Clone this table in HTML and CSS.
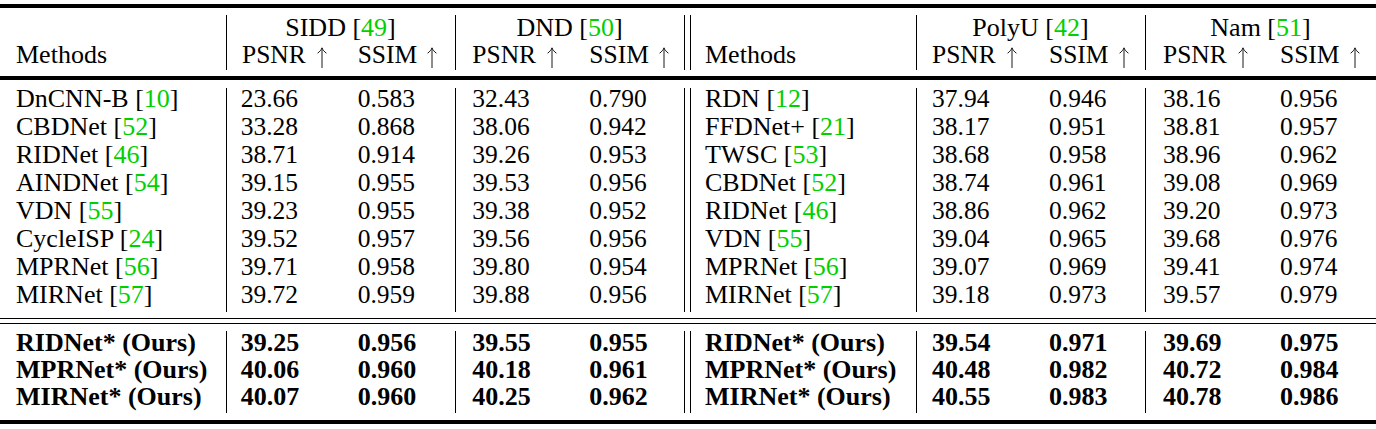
FILE: index.html
```html
<!DOCTYPE html>
<html>
<head>
<meta charset="utf-8">
<link rel="stylesheet" href="styles.css">
</head>
<body>
<div class="page">
  <div class="rule heavy top"></div>
  <div class="sec head">
    <div class="mh">Methods</div>
    <div class="grp g-sidd">SIDD [<span class="ref">49</span>]</div>
    <div class="grp g-dnd">DND [<span class="ref">50</span>]</div>
    <div class="grp g-poly">PolyU [<span class="ref">42</span>]</div>
    <div class="grp g-nam">Nam [<span class="ref">51</span>]</div>
    <div class="sub p2">PSNR<svg class="up psnr" viewBox="0 0 10 21" aria-label="↑"><path d="M5 1.2V21M5 0.8C4.2 3 2.6 4.8 0.6 6.2M5 0.8C5.8 3 7.4 4.8 9.4 6.2"/></svg></div>
    <div class="sub p3">SSIM<svg class="up ssim" viewBox="0 0 10 21" aria-label="↑"><path d="M5 1.2V21M5 0.8C4.2 3 2.6 4.8 0.6 6.2M5 0.8C5.8 3 7.4 4.8 9.4 6.2"/></svg></div>
    <div class="sub p4">PSNR<svg class="up psnr" viewBox="0 0 10 21" aria-label="↑"><path d="M5 1.2V21M5 0.8C4.2 3 2.6 4.8 0.6 6.2M5 0.8C5.8 3 7.4 4.8 9.4 6.2"/></svg></div>
    <div class="sub p5">SSIM<svg class="up ssim" viewBox="0 0 10 21" aria-label="↑"><path d="M5 1.2V21M5 0.8C4.2 3 2.6 4.8 0.6 6.2M5 0.8C5.8 3 7.4 4.8 9.4 6.2"/></svg></div>
    <div class="sub p6 name">Methods</div>
    <div class="sub p7">PSNR<svg class="up psnr" viewBox="0 0 10 21" aria-label="↑"><path d="M5 1.2V21M5 0.8C4.2 3 2.6 4.8 0.6 6.2M5 0.8C5.8 3 7.4 4.8 9.4 6.2"/></svg></div>
    <div class="sub p8">SSIM<svg class="up ssim" viewBox="0 0 10 21" aria-label="↑"><path d="M5 1.2V21M5 0.8C4.2 3 2.6 4.8 0.6 6.2M5 0.8C5.8 3 7.4 4.8 9.4 6.2"/></svg></div>
    <div class="sub p9">PSNR<svg class="up psnr" viewBox="0 0 10 21" aria-label="↑"><path d="M5 1.2V21M5 0.8C4.2 3 2.6 4.8 0.6 6.2M5 0.8C5.8 3 7.4 4.8 9.4 6.2"/></svg></div>
    <div class="sub p10">SSIM<svg class="up ssim" viewBox="0 0 10 21" aria-label="↑"><path d="M5 1.2V21M5 0.8C4.2 3 2.6 4.8 0.6 6.2M5 0.8C5.8 3 7.4 4.8 9.4 6.2"/></svg></div>
  </div>
  <div class="rule heavy mid"></div>
  <div class="sec rows body">
    <div>DnCNN-B [<span class="ref">10</span>]</div><div>23.66</div><div>0.583</div><div>32.43</div><div>0.790</div><div>RDN [<span class="ref">12</span>]</div><div>37.94</div><div>0.946</div><div>38.16</div><div>0.956</div>
    <div>CBDNet [<span class="ref">52</span>]</div><div>33.28</div><div>0.868</div><div>38.06</div><div>0.942</div><div>FFDNet+ [<span class="ref">21</span>]</div><div>38.17</div><div>0.951</div><div>38.81</div><div>0.957</div>
    <div>RIDNet [<span class="ref">46</span>]</div><div>38.71</div><div>0.914</div><div>39.26</div><div>0.953</div><div>TWSC [<span class="ref">53</span>]</div><div>38.68</div><div>0.958</div><div>38.96</div><div>0.962</div>
    <div>AINDNet [<span class="ref">54</span>]</div><div>39.15</div><div>0.955</div><div>39.53</div><div>0.956</div><div>CBDNet [<span class="ref">52</span>]</div><div>38.74</div><div>0.961</div><div>39.08</div><div>0.969</div>
    <div>VDN [<span class="ref">55</span>]</div><div>39.23</div><div>0.955</div><div>39.38</div><div>0.952</div><div>RIDNet [<span class="ref">46</span>]</div><div>38.86</div><div>0.962</div><div>39.20</div><div>0.973</div>
    <div>CycleISP [<span class="ref">24</span>]</div><div>39.52</div><div>0.957</div><div>39.56</div><div>0.956</div><div>VDN [<span class="ref">55</span>]</div><div>39.04</div><div>0.965</div><div>39.68</div><div>0.976</div>
    <div>MPRNet [<span class="ref">56</span>]</div><div>39.71</div><div>0.958</div><div>39.80</div><div>0.954</div><div>MPRNet [<span class="ref">56</span>]</div><div>39.07</div><div>0.969</div><div>39.41</div><div>0.974</div>
    <div>MIRNet [<span class="ref">57</span>]</div><div>39.72</div><div>0.959</div><div>39.88</div><div>0.956</div><div>MIRNet [<span class="ref">57</span>]</div><div>39.18</div><div>0.973</div><div>39.57</div><div>0.979</div>
  </div>
  <div class="rule double"></div>
  <div class="sec rows ours">
    <div>RIDNet* (Ours)</div><div>39.25</div><div>0.956</div><div>39.55</div><div>0.955</div><div>RIDNet* (Ours)</div><div>39.54</div><div>0.971</div><div>39.69</div><div>0.975</div>
    <div>MPRNet* (Ours)</div><div>40.06</div><div>0.960</div><div>40.18</div><div>0.961</div><div>MPRNet* (Ours)</div><div>40.48</div><div>0.982</div><div>40.72</div><div>0.984</div>
    <div>MIRNet* (Ours)</div><div>40.07</div><div>0.960</div><div>40.25</div><div>0.962</div><div>MIRNet* (Ours)</div><div>40.55</div><div>0.983</div><div>40.78</div><div>0.986</div>
  </div>
  <div class="rule heavy bottom"></div>
</div>
</body>
</html>
```

FILE: styles.css
```css
html, body {
  margin: 0;
  padding: 0;
  background: #fff;
}
.page {
  width: 1376px;
  padding-top: 4px;
  font-family: "Liberation Serif", "Times New Roman", serif;
  font-size: 25.5px;
  color: #000;
}
.rule.heavy {
  background: #000;
  height: 3.5px;
}
.rule.top { margin-bottom: 6.5px; }
.rule.mid { margin-top: 6px; margin-bottom: 5px; }
.rule.double {
  margin-top: 6.5px;
  margin-bottom: 4.5px;
  height: 6px;
  border-top: 1.5px solid #000;
  border-bottom: 1.5px solid #000;
  box-sizing: border-box;
}
.rule.bottom { margin-top: 6.5px; height: 4.5px; }

.sec {
  display: grid;
  grid-template-columns: 226px 115px 114px 118px 111px 232px 117px 112px 118px 113px;
  background-image: linear-gradient(to right,
    transparent 226px, #000 226px 227px,
    transparent 227px 455px, #000 455px 456px,
    transparent 456px 684px, #000 684px 685px,
    transparent 685px 690px, #000 690px 691px,
    transparent 691px 916px, #000 916px 917px,
    transparent 917px 1145px, #000 1145px 1146px,
    transparent 1146px);
  background-repeat: no-repeat;
}
.ref { color: #00d000; }

/* header */
.head {
  line-height: 27px;
  padding-bottom: 2px;
  grid-template-rows: 27px 27px;
  background-position: 0 1px;
}
.head .mh { grid-column: 1; grid-row: 1 / 3; align-self: end; padding-left: 16px; font-size: 26px; }
.head .grp { grid-row: 1; text-align: center; font-size: 26px; }
.head .name { font-size: 26px; }
.g-sidd { grid-column: 2 / 4; }
.g-dnd { grid-column: 4 / 6; }
.g-poly { grid-column: 7 / 9; }
.g-nam { grid-column: 9 / 11; }
.head .sub { grid-row: 2; white-space: nowrap; }
.p2 { grid-column: 2; padding-left: 16px; }
.p3 { grid-column: 3; padding-left: 16.7px; }
.p4 { grid-column: 4; padding-left: 17.3px; }
.p5 { grid-column: 5; padding-left: 16.3px; }
.p6 { grid-column: 6; padding-left: 21px; }
.p7 { grid-column: 7; padding-left: 16px; }
.p8 { grid-column: 8; padding-left: 16px; }
.p9 { grid-column: 9; padding-left: 18px; }
.p10 { grid-column: 10; padding-left: 17px; }

.up {
  width: 10px;
  height: 21px;
  vertical-align: -5px;
  fill: none;
  stroke: #1a1a1a;
  stroke-width: 1;
}
.up.psnr { margin-left: 11px; }
.up.ssim { margin-left: 10px; }

/* data rows */
.rows > :nth-child(10n+1) { padding-left: 16px; }
.rows > :nth-child(10n+2) { padding-left: 14.7px; }
.rows > :nth-child(10n+3) { padding-left: 16.7px; }
.rows > :nth-child(10n+4) { padding-left: 17.3px; }
.rows > :nth-child(10n+5) { padding-left: 16.3px; }
.rows > :nth-child(10n+6) { padding-left: 21px; }
.rows > :nth-child(10n+7) { padding-left: 16px; }
.rows > :nth-child(10n+8) { padding-left: 16px; }
.rows > :nth-child(10n+9) { padding-left: 18px; }
.rows > :nth-child(10n+10) { padding-left: 17px; }
.body > :nth-child(10n+1),
.body > :nth-child(10n+6) { font-size: 26px; }

.body {
  line-height: 28px;
  padding-bottom: 3px;
  background-position: 0 3px;
}
.ours {
  line-height: 27px;
  font-size: 26px;
  font-weight: 700;
  padding-bottom: 3.5px;
  background-position: 0 2.5px;
}
```
